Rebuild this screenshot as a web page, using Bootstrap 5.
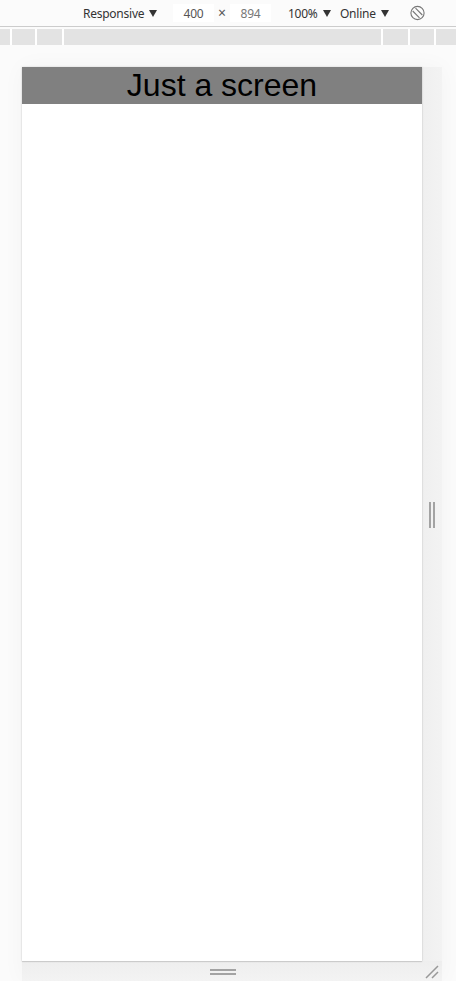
<!DOCTYPE html>
<html lang="en">
<head>
<meta charset="utf-8">
<title>Just a screen</title>
<link href="https://cdn.jsdelivr.net/npm/bootstrap@5.3.0/dist/css/bootstrap.min.css" rel="stylesheet">
<style>
html,body{height:100%;margin:0;overflow:hidden;background:#fbfbfb}
.dt-toolbar{height:27px;background:#fbfbfb;border-bottom:1px solid #ccc;padding-left:83px;font:12px/26px "Noto Sans","Open Sans",sans-serif;letter-spacing:-.25px;color:#333}
.dt-label{padding-top:1px}
.dt-caret{display:inline-block;width:0;height:0;border-left:4px solid transparent;border-right:4px solid transparent;border-top:7px solid #333;margin:0 0 1px 5px}
.dt-resp{width:90px}
.dt-num{width:41px;height:18px;line-height:19px;background:#fff;text-align:center;color:#555}
.dt-num-h{color:#777}
.dt-times{width:16px;text-align:center;color:#555;font-size:14px}
.dt-zoom{margin-left:17px;width:52px}
.dt-online{width:70px}
.dt-rule{height:16px;margin-top:2px;background:#e3e3e3}
.dt-tick{width:2px;background:#fff;flex:none}
.dt-w10{width:10px}.dt-w23{width:23px}.dt-w25{width:25px}.dt-w24{width:24px}.dt-w20{width:20px}
.dt-stage{padding:22px 0 0 22px}
.dt-grid{display:grid;grid-template-columns:400px 20px;grid-template-rows:894px 20px;background:#f2f2f2;width:420px;box-shadow:0 0 22px rgba(0,0,0,.035)}
.dt-screen{background:#fff;box-shadow:0 1px 1px rgba(0,0,0,.1),0 0 2px rgba(0,0,0,.15);position:relative;z-index:1}
.dt-title{background:#808080;color:#000;margin:0;height:37px;font:400 32px/37px "Liberation Sans",Arial,sans-serif;text-align:center}
.dt-side{background:linear-gradient(90deg,#efefef,#f3f3f3);padding-top:2px}
.dt-bottom{background:linear-gradient(180deg,#eeeeee,#f3f3f3);padding-top:2px}
.dt-bars{gap:2px}
.dt-hoff{padding-left:2px}
.dt-vbar{width:2px;height:26px;background:#a3a3a3}
.dt-hbar{width:26px;height:2px;background:#a3a3a3}
</style>
</head>
<body>
<div class="dt-toolbar d-flex align-items-center">
  <span class="dt-resp dt-label">Responsive<i class="dt-caret"></i></span>
  <span class="dt-num">400</span>
  <span class="dt-times">×</span>
  <span class="dt-num dt-num-h">894</span>
  <span class="dt-zoom dt-label">100%<i class="dt-caret"></i></span>
  <span class="dt-online dt-label">Online<i class="dt-caret"></i></span>
  <svg width="16" height="16" viewBox="0 0 16 16" fill="none" stroke="#777" stroke-width="1.1" aria-hidden="true"><circle cx="7.5" cy="8" r="6.6"/><path d="M2.7 6 9.5 12.8M5.5 3.2 12.3 10"/></svg>
</div>
<div class="dt-rule d-flex">
  <div class="dt-w10"></div><div class="dt-tick"></div>
  <div class="dt-w23"></div><div class="dt-tick"></div>
  <div class="dt-w25"></div><div class="dt-tick"></div>
  <div class="flex-grow-1"></div><div class="dt-tick"></div>
  <div class="dt-w25"></div><div class="dt-tick"></div>
  <div class="dt-w24"></div><div class="dt-tick"></div>
  <div class="dt-w20 flex-shrink-0"></div>
</div>
<div class="dt-stage">
  <div class="dt-grid">
    <div class="dt-screen"><h1 class="dt-title">Just a screen</h1></div>
    <div class="dt-side dt-bars d-flex align-items-center justify-content-center"><i class="dt-vbar"></i><i class="dt-vbar"></i></div>
    <div class="dt-bottom dt-bars dt-hoff d-flex flex-column align-items-center justify-content-center"><i class="dt-hbar"></i><i class="dt-hbar"></i></div>
    <div class="dt-bottom d-flex align-items-center justify-content-center">
      <svg width="14" height="14" viewBox="0 0 14 14" stroke="#999" stroke-width="1.5" aria-hidden="true"><path d="M1 13 13 1M7 13 13 7"/></svg>
    </div>
  </div>
</div>
</body>
</html>
